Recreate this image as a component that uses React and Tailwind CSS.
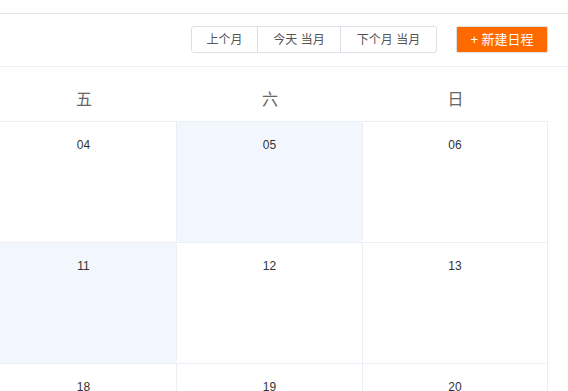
import React from "react";

const rows = [
  [
    { d: "04" },
    { d: "05", hl: true },
    { d: "06" },
  ],
  [
    { d: "11", hl: true },
    { d: "12" },
    { d: "13" },
  ],
  [
    { d: "18" },
    { d: "19" },
    { d: "20" },
  ],
];

export default function App() {
  return (
    <div
      className="w-[568px] h-[391px] overflow-hidden bg-white text-[#333]"
      style={{ fontFamily: '"Liberation Sans", "Noto Sans CJK SC", sans-serif' }}
    >
      <div className="h-[13px]" />
      <div className="border-t border-[#e4e4e4] border-b border-b-[#ebeef5] h-[54px] flex items-start justify-end pr-[20px] pt-[12px]">
        <div className="flex h-[27px] border border-[#dcdfe6] rounded-[3px] text-[12px] text-[#555]">
          <div className="w-[66px] flex items-center justify-center border-r border-[#dcdfe6]">上个月</div>
          <div className="w-[83px] flex items-center justify-center border-r border-[#dcdfe6]">今天 当月</div>
          <div className="w-[95px] flex items-center justify-center">下个月 当月</div>
        </div>
        <div className="ml-[19px] w-[92px] h-[27px] bg-[#ff6a00] border border-[#dcdfe6] rounded-[2px] text-white text-[13px] flex items-center justify-center">
          + 新建日程
        </div>
      </div>
      <div className="ml-[-9px] w-[557px]">
        <div className="flex h-[55px] border-b border-[#ebeef5]">
          {["五", "六", "日"].map((w, j) => (
            <div
              key={w}
              className={`${j === 2 ? "w-[185px]" : "w-[186px]"} pt-[23px] text-center text-[16px] leading-[20px] text-[#666]`}
            >
              {w}
            </div>
          ))}
        </div>
        {rows.map((r, i) => (
          <div key={i} className="flex h-[121px] border-b border-[#ebeef5]">
            {r.map((c, j) => (
              <div
                key={j}
                className={`${j === 2 ? "w-[185px]" : "w-[186px]"} border-r border-[#ebeef5] text-center text-[12px] leading-[16px] pt-[15px] ${
                  c.hl ? "bg-[#f2f7fe] rounded-[4px]" : "bg-white"
                }`}
              >
                {c.d}
              </div>
            ))}
          </div>
        ))}
      </div>
    </div>
  );
}
